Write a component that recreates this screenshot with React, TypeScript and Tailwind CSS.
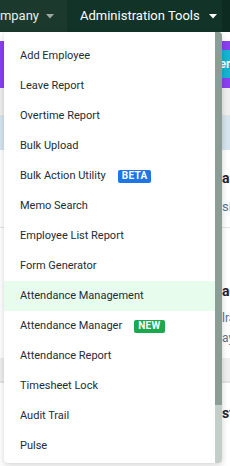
import React from "react";

const items: { label: string; badge?: "BETA" | "NEW"; active?: boolean }[] = [
  { label: "Add Employee" },
  { label: "Leave Report" },
  { label: "Overtime Report" },
  { label: "Bulk Upload" },
  { label: "Bulk Action Utility", badge: "BETA" },
  { label: "Memo Search" },
  { label: "Employee List Report" },
  { label: "Form Generator" },
  { label: "Attendance Management", active: true },
  { label: "Attendance Manager", badge: "NEW" },
  { label: "Attendance Report" },
  { label: "Timesheet Lock" },
  { label: "Audit Trail" },
  { label: "Pulse" },
];

function Caret() {
  return (
    <svg width="8" height="5" viewBox="0 0 8 5" className="shrink-0">
      <path d="M0 0 L8 0 L4 4.5 Z" fill="currentColor" />
    </svg>
  );
}

export default function App() {
  return (
    <div
      className="relative w-[230px] h-[466px] overflow-hidden bg-white"
      style={{ fontFamily: "Roboto, 'Noto Sans', sans-serif" }}
    >
      {/* Top nav */}
      <div className="flex h-[32px] bg-[#0d2b21] text-white text-[13px]">
        <div className="flex items-center w-[67px] bg-[#1b3a2d] overflow-hidden">
          <div className="flex items-center gap-[7px] -ml-[16px] whitespace-nowrap">
            <span className="text-[#e8efe9]">Company</span>
            <span className="text-[#9aa9a2]">
              <Caret />
            </span>
          </div>
        </div>
        <div className="flex items-center w-[155px] bg-[#123428] pl-[13px] gap-[9px] whitespace-nowrap">
          <span>Administration Tools</span>
          <span className="text-white">
            <Caret />
          </span>
        </div>
      </div>

      {/* Background page content */}
      <div className="flex flex-col">
        <div className="h-[9px] bg-white" />
        <div className="flex h-[47px] bg-[#8a3ff0] justify-end items-stretch">
          <div className="flex items-center mt-[9px] mb-[10px] mr-[-8px] w-[30px] pl-[3px] bg-[#14b3d2] text-white text-[12px] font-bold whitespace-nowrap overflow-hidden">
            Here
          </div>
        </div>
        <div className="h-[28px] bg-[#efefef] border-b border-[#e2e2e2]" />
        <div className="h-[34px] bg-[#d6e4ef]" />
        <div className="flex flex-col items-end pr-0 pt-[18px] h-[78px] border-b border-[#e5e5e5]">
          <div className="text-[14px] font-bold text-[#1c2430] w-[8px] overflow-hidden whitespace-nowrap">as</div>
          <div className="mt-[8px] text-[13px] text-[#5a7190] w-[8px] overflow-hidden whitespace-nowrap">si</div>
        </div>
        <div className="flex flex-col items-end pt-[53px] h-[130px]">
          <div className="text-[14px] font-bold text-[#1c2430] w-[8px] overflow-hidden whitespace-nowrap">ag</div>
          <div className="mt-[7px] text-[12px] text-[#5a7190] w-[8px] overflow-hidden whitespace-nowrap">lra</div>
          <div className="mt-[2px] text-[12px] text-[#5a7190] w-[8px] overflow-hidden whitespace-nowrap">ay</div>
        </div>
        <div className="h-[24px] bg-[#efefef] border-b border-[#e2e2e2]" />
        <div className="flex flex-col items-end pt-[20px] h-[60px] border-t border-[#e5e5e5]">
          <div className="text-[14px] font-bold text-[#1c2430] w-[8px] overflow-hidden whitespace-nowrap">st</div>
        </div>
      </div>

      {/* Dropdown */}
      <div className="absolute left-[4px] top-[32px] w-[218px] h-[431px] flex bg-white rounded-[4px] shadow-[0_2px_6px_rgba(0,0,0,0.18)] overflow-hidden">
        <div className="flex-1 flex flex-col pt-[9px] text-[11px] text-[#222c36]">
          {items.map((it) => (
            <div
              key={it.label}
              className={`flex items-center h-[30px] pl-[16px] shrink-0 ${it.active ? "bg-[#e8fcee]" : ""}`}
            >
              <span className="whitespace-nowrap">{it.label}</span>
              {it.badge === "BETA" && (
                <span className="ml-[12px] px-[4px] h-[13px] flex items-center rounded-[2px] bg-[#1f74e6] text-white text-[10px] font-bold tracking-[0.3px] leading-none">
                  BETA
                </span>
              )}
              {it.badge === "NEW" && (
                <span className="ml-[12px] px-[4px] h-[13px] flex items-center rounded-[2px] bg-[#1ca84c] text-white text-[10px] font-bold tracking-[0.3px] leading-none">
                  NEW
                </span>
              )}
            </div>
          ))}
        </div>
        <div className="w-[7px] flex flex-col bg-[#c3cec8]">
          <div className="h-[373px] bg-[#8b9d94]" />
        </div>
      </div>
    </div>
  );
}
